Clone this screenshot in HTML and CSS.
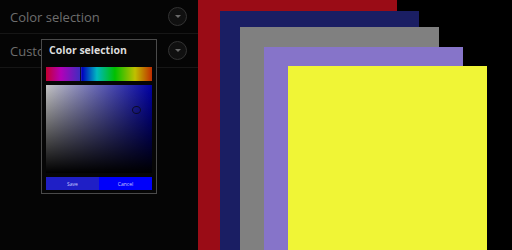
FILE: index.html
```html
<!DOCTYPE html>
<html lang="en">
<head>
  <meta charset="UTF-8" />
  <title>Color selection</title>
  <link rel="stylesheet" href="styles.css">
</head>
<body>

  <div class="screen">
    <div class="settings">
      <div class="setting-row">
        <span class="setting-label">Color selection</span>
        <span class="expand-btn"><span class="arrow"></span></span>
      </div>
      <div class="setting-row">
        <span class="setting-label">Custom colors</span>
        <span class="expand-btn"><span class="arrow"></span></span>
      </div>
    </div>

    <!-- Color cards -->
    <div class="cards">
      <div class="card card-red"></div>
      <div class="card card-navy"></div>
      <div class="card card-gray"></div>
      <div class="card card-purple"></div>
      <div class="card card-yellow"></div>
    </div>

    <!-- Picker dialog -->
    <div class="picker">
      <div class="picker-title">Color selection</div>
      <div class="hue-bar"><span class="hue-mark"></span></div>
      <div class="sv-box">
        <span class="sv-mark"></span>
      </div>
      <div class="picker-buttons">
        <button class="btn btn-save">Save</button>
        <button class="btn btn-cancel">Cancel</button>
      </div>
    </div>
  </div>

</body>
</html>
```

FILE: styles.css
```css
body {
  margin: 0;
  background: #000;
  font-family: 'Open Sans', 'Noto Sans', sans-serif;
}

.screen {
  position: relative;
  width: 512px;
  height: 250px;
  overflow: hidden;
  background: #000;
}

.settings {
  width: 198px;
  height: 250px;
  background: #050505;
}

.setting-row {
  display: flex;
  align-items: center;
  justify-content: space-between;
  height: 33px;
  padding: 0 11px 0 10px;
  border-bottom: 1px solid #161616;
}

.setting-label {
  color: #6e6e6e;
  font-size: 13px;
}

.expand-btn {
  display: flex;
  justify-content: center;
  align-items: center;
  width: 17px;
  height: 17px;
  border: 1px solid #333;
  border-radius: 50%;
  background: #101010;
}

.arrow {
  width: 0;
  height: 0;
  border-left: 3px solid transparent;
  border-right: 3px solid transparent;
  border-top: 3px solid #6a6a6a;
}

/* Cards */
.card {
  position: absolute;
  width: 199px;
  height: 300px;
}

.card-red {
  left: 198px;
  top: -8px;
  background: #9a0c16;
}

.card-navy {
  left: 220px;
  top: 11px;
  background: #1a1e63;
}

.card-gray {
  left: 240px;
  top: 27px;
  background: #808080;
}

.card-purple {
  left: 264px;
  top: 47px;
  background: #8674c9;
}

.card-yellow {
  left: 288px;
  top: 66px;
  background: #f0f536;
}

/* Picker */
.picker {
  position: absolute;
  left: 41px;
  top: 39px;
  width: 106px;
  padding: 4px 4px 3px 4px;
  border: 1px solid #4a4a4a;
  background: #060606;
  display: flex;
  flex-direction: column;
}

.picker-title {
  color: #dcdcdc;
  font-size: 10.5px;
  font-weight: bold;
  height: 18px;
  line-height: 13px;
  padding-left: 3px;
  margin-bottom: 5px;
}

.hue-bar {
  position: relative;
  height: 14px;
  background: linear-gradient(to right,
    #c40030 0%, #b300b8 14%, #3a2ec0 33%, #0000c0 34%,
    #00b8c0 48%, #00c000 65%, #c0c000 84%, #c02c00 100%);
}

.hue-mark {
  position: absolute;
  left: 34px;
  top: 0;
  width: 1px;
  height: 14px;
  background: #101030;
}

.sv-box {
  position: relative;
  height: 88px;
  margin-top: 4px;
  background:
    linear-gradient(to bottom, rgba(0,0,0,0), #000),
    linear-gradient(to right, #c4c4c4, #0000a4);
}

.sv-mark {
  position: absolute;
  left: 86px;
  top: 21px;
  width: 7px;
  height: 6px;
  border: 1px solid #0c0c28;
  border-radius: 50%;
}

.picker-buttons {
  display: flex;
  margin-top: 4px;
  height: 13px;
}

.btn {
  flex: 1;
  border: none;
  padding: 0;
  color: #c8c8ff;
  font-family: 'Open Sans', sans-serif;
  font-size: 5px;
}

.btn-save {
  background: #1f1fc6;
}

.btn-cancel {
  background: #0000fa;
}
```
